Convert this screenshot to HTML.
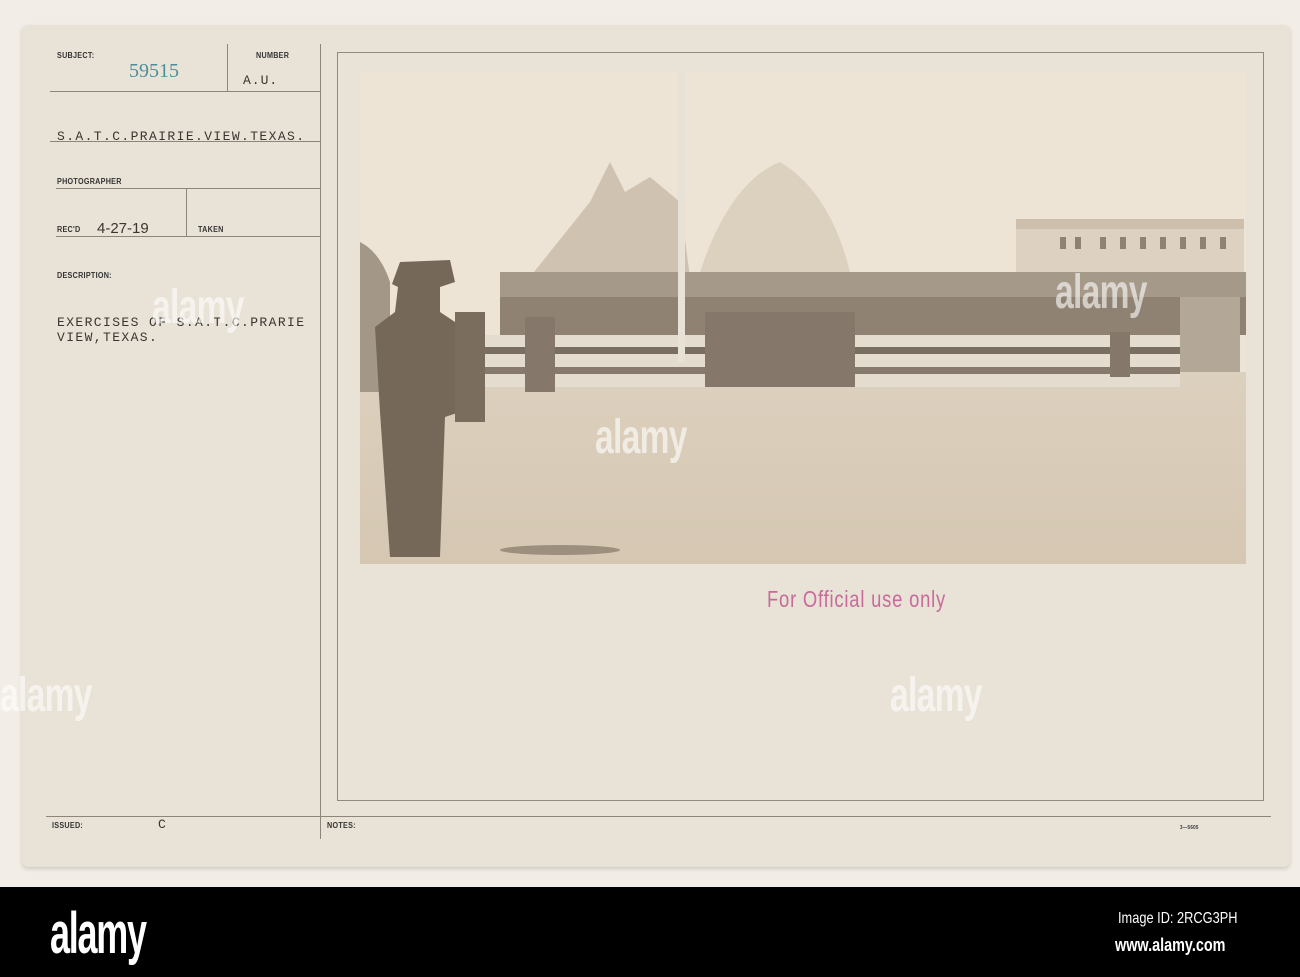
<!DOCTYPE html>
<html><head><meta charset="utf-8"><style>
html,body{margin:0;padding:0}
body{width:1300px;height:977px;position:relative;overflow:hidden;background:#f2ede6;font-family:"Liberation Sans",sans-serif}
.card{position:absolute;left:22px;top:25px;width:1268px;height:842px;background:#e9e2d7;border-radius:6px;box-shadow:0 2px 4px rgba(0,0,0,.15)}
.a{position:absolute}
.lbl{position:absolute;font-family:"Liberation Sans",sans-serif;font-weight:bold;font-size:8px;color:#333;letter-spacing:.3px;transform:scaleX(.9);transform-origin:left}
.ty{position:absolute;font-family:"Liberation Mono",monospace;font-size:13px;color:#3a3530;letter-spacing:1.4px}
.hl{position:absolute;height:1px;background:#8d857a}
.vl{position:absolute;width:1px;background:#8d857a}
.wm{position:absolute;color:rgba(255,255,255,.6);font-weight:bold;font-family:"Liberation Sans",sans-serif;transform:scaleX(.7);transform-origin:left;letter-spacing:-1px}
.bar{position:absolute;left:0;top:887px;width:1300px;height:90px;background:#000}
</style></head><body>
<div class="card"></div>
<div class="hl" style="left:50px;top:91px;width:270px"></div>
<div class="hl" style="left:50px;top:141px;width:270px"></div>
<div class="hl" style="left:56px;top:188px;width:264px"></div>
<div class="hl" style="left:56px;top:236px;width:264px"></div>
<div class="vl" style="left:227px;top:44px;height:47px"></div>
<div class="vl" style="left:186px;top:188px;height:48px"></div>
<div class="vl" style="left:320px;top:44px;height:795px"></div>
<div class="hl" style="left:46px;top:816px;width:1225px"></div>
<div class="a" style="left:337px;top:52px;width:925px;height:747px;border:1px solid #938a7e"></div>

<div class="lbl" style="left:57px;top:51px">SUBJECT:</div>
<div class="ty" style="left:129px;top:60px;font-size:20px;letter-spacing:0;color:#4b8f9a;font-family:'Liberation Serif',serif">59515</div>
<div class="lbl" style="left:256px;top:51px">NUMBER</div>
<div class="ty" style="left:243px;top:73px;letter-spacing:1px">A.U.</div>
<div class="ty" style="left:57px;top:129px">S.A.T.C.PRAIRIE.VIEW.TEXAS.</div>
<div class="lbl" style="left:57px;top:177px">PHOTOGRAPHER</div>
<div class="lbl" style="left:57px;top:225px">REC'D</div>
<div class="ty" style="left:97px;top:220px;font-family:'Liberation Sans',sans-serif;font-size:15px;letter-spacing:0">4-27-19</div>
<div class="lbl" style="left:198px;top:225px">TAKEN</div>
<div class="lbl" style="left:57px;top:271px">DESCRIPTION:</div>
<div class="ty" style="left:57px;top:315px;line-height:15px">EXERCISES OF S.A.T.C.PRARIE<br>VIEW,TEXAS.</div>
<div class="lbl" style="left:52px;top:821px">ISSUED:</div>
<div class="ty" style="left:158px;top:817px">C</div>
<div class="lbl" style="left:327px;top:821px">NOTES:</div>
<div class="lbl" style="left:1180px;top:825px;font-size:5px">3—5605</div>

<svg class="a" style="left:360px;top:72px" width="886" height="492" viewBox="0 0 886 492">
<defs><linearGradient id="gr" x1="0" y1="0" x2="0" y2="1"><stop offset="0" stop-color="#dcd0be"/><stop offset="1" stop-color="#d5c7b2"/></linearGradient></defs>
<rect width="886" height="492" fill="#ede4d6"/>
<rect y="300" width="886" height="192" fill="url(#gr)"/>
<path d="M170 205 L230 130 L250 90 L265 120 L290 105 L320 130 L330 205Z" fill="#d0c2b0"/>
<path d="M340 200 Q370 110 420 90 Q470 120 490 200Z" fill="#dcd0bf"/>
<rect x="656" y="147" width="228" height="60" fill="#ddd2c2"/>
<rect x="656" y="147" width="228" height="10" fill="#cdbfac"/>
<g fill="#8e8275"><rect x="700" y="165" width="6" height="12"/><rect x="715" y="165" width="6" height="12"/><rect x="740" y="165" width="6" height="12"/><rect x="760" y="165" width="6" height="12"/><rect x="780" y="165" width="6" height="12"/><rect x="800" y="165" width="6" height="12"/><rect x="820" y="165" width="6" height="12"/><rect x="840" y="165" width="6" height="12"/><rect x="860" y="165" width="6" height="12"/></g>
<path d="M0 170 Q20 180 30 210 L30 320 L0 320Z" fill="#a39788"/>
<rect x="140" y="200" width="746" height="63" fill="#a5998a"/>
<rect x="140" y="225" width="746" height="38" fill="#8f8273"/>
<rect x="120" y="263" width="700" height="52" fill="#e4dccf"/>
<rect x="120" y="275" width="700" height="7" fill="#796e61"/>
<rect x="120" y="295" width="700" height="7" fill="#857a6d"/>
<rect x="318" y="0" width="7" height="290" fill="#e8e1d6"/>
<rect x="345" y="240" width="150" height="75" fill="#85786a"/>
<rect x="165" y="245" width="30" height="75" fill="#85786a"/>
<rect x="750" y="260" width="20" height="45" fill="#85786a"/>
<rect x="820" y="225" width="60" height="75" fill="#b3a798"/>
<path d="M40 190 L90 188 L95 210 L80 215 L80 240 L95 250 L100 340 L85 345 L80 485 L30 485 L20 340 L15 255 L35 240 L38 215 L32 212Z" fill="#756858"/>
<rect x="95" y="240" width="30" height="110" fill="#7a6d5e"/>
<ellipse cx="200" cy="478" rx="60" ry="5" fill="#9d8f7e"/>
</svg>

<div class="a" style="left:767px;top:586px;font-size:23px;color:#c86a9a;transform:scaleX(.8);transform-origin:left;letter-spacing:1px">For Official use only</div>

<div class="wm" style="left:152px;top:280px;font-size:48px">alamy</div>
<div class="wm" style="left:595px;top:410px;font-size:48px">alamy</div>
<div class="wm" style="left:1055px;top:265px;font-size:48px">alamy</div>
<div class="wm" style="left:0px;top:668px;font-size:48px">alamy</div>
<div class="wm" style="left:890px;top:668px;font-size:48px">alamy</div>

<div class="bar"></div>
<div class="a" style="left:50px;top:900px;font-size:58px;font-weight:bold;color:#fff;transform:scaleX(.62);transform-origin:left;letter-spacing:-2px">alamy</div>
<div class="a" style="left:1118px;top:910px;font-size:16px;color:#fff;transform:scaleX(.8);transform-origin:left">Image ID: 2RCG3PH</div>
<div class="a" style="left:1115px;top:935px;font-size:18px;font-weight:bold;color:#fff;transform:scaleX(.8);transform-origin:left">www.alamy.com</div>
</body></html>
